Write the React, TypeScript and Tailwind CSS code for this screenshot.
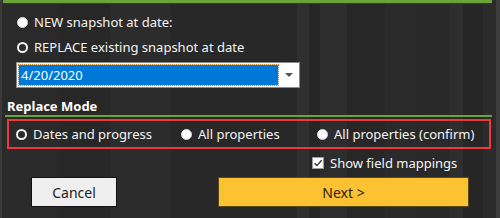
import React from "react";

const FONT = { fontFamily: '"Noto Sans", "Open Sans", "Liberation Sans", sans-serif' };

function Radio({ checked }: { checked?: boolean }) {
  // filled white dot = selected style in this dark theme, ring = unselected
  return checked ? (
    <span className="inline-block w-[11px] h-[11px] rounded-full bg-white border border-[#d8d8d8] shrink-0" />
  ) : (
    <span className="inline-block w-[11px] h-[11px] rounded-full border-2 border-[#f2f2f2] bg-[#2a2a2a] shrink-0" />
  );
}

function RadioRow({ label, checked, className = "" }: { label: string; checked?: boolean; className?: string }) {
  return (
    <div className={`flex items-center gap-[6px] ${className}`}>
      <Radio checked={checked} />
      <span className="text-[13px] leading-[20px] text-[#f4f4f4]">{label}</span>
    </div>
  );
}

export default function App() {
  return (
    <div
      style={FONT}
      className="w-[500px] h-[218px] overflow-hidden flex flex-col bg-[linear-gradient(90deg,#3a3a3a_0px,#3a3a3a_2px,#2a2a2a_2px,#2a2a2a_60px,#272727_60px,#272727_110px,#2c2c2c_110px,#2c2c2c_170px,#282828_170px,#282828_297px,#2f2f2f_297px,#2f2f2f_309px,#262626_309px,#262626_320px,#2d2d2d_320px,#2d2d2d_347px,#272727_347px,#272727_385px,#2a2a2a_385px,#2a2a2a_417px,#292929_417px,#292929_450px,#2e2e2e_450px,#2e2e2e_463px,#262626_463px,#262626_483px,#2b2b2b_483px,#2b2b2b_496px,#3c3c3c_496px,#3c3c3c_500px)]"
    >
      {/* top header strip */}
      <div className="ml-[3px] w-[489px] h-[4px] bg-[#6aa338] border-b border-[#3b3145]" />

      <RadioRow label="NEW snapshot at date:" checked className="mt-[8px] pl-[17px] h-[20px]" />
      <RadioRow label="REPLACE existing snapshot at date" className="mt-[5px] pl-[17px] h-[20px]" />

      {/* date dropdown */}
      <div className="mt-[5px] ml-[16px] w-[284px] h-[26px] bg-white border border-[#8a8a8a] flex items-center pl-[2px]">
        <div className="w-[259px] h-[20px] bg-[#0078d7] outline-1 outline-dotted outline-[#c47a2c] flex items-center pl-[2px]">
          <span className="text-[13px] text-white leading-none">4/20/2020</span>
        </div>
        <div className="flex-1 flex items-center justify-center">
          <span className="w-0 h-0 border-l-[4px] border-r-[4px] border-t-[4px] border-l-transparent border-r-transparent border-t-[#555]" />
        </div>
      </div>

      <div className="mt-[10px] ml-[7px] h-[16px] text-[13px] leading-[16px] font-bold text-white">Replace Mode</div>
      <div className="mt-[1px] ml-[5px] w-[487px] h-[2px] bg-[#6aa338]" />

      {/* highlighted mode options */}
      <div className="mt-[2px] ml-[7px] w-[484px] h-[30px] border-2 border-[#ec3a3a] flex items-center pl-[7px]">
        <RadioRow label="Dates and progress" className="w-[165px]" />
        <RadioRow label="All properties" checked className="w-[136px]" />
        <RadioRow label="All properties (confirm)" checked />
      </div>

      <div className="mt-[7px] ml-[312px] h-[14px] flex items-center gap-[6px]">
        <span className="w-[12px] h-[12px] bg-white border border-[#9a9a9a] flex items-center justify-center">
          <svg width="10" height="10" viewBox="0 0 10 10">
            <path d="M1.5 5.2 L4 7.6 L8.6 2.2" fill="none" stroke="#333" strokeWidth="1.4" />
          </svg>
        </span>
        <span className="text-[13px] leading-[14px] text-[#f4f4f4]">Show field mappings</span>
      </div>

      <div className="mt-[7px] flex">
        <button className="ml-[31px] w-[86px] h-[30px] bg-[#efefef] border border-[#111] text-[14px] text-[#222]">
          Cancel
        </button>
        <button className="ml-[101px] w-[251px] h-[30px] bg-[#fcc232] border border-[#5a4a1a] text-[14px] text-[#2a2110]">
          Next &gt;
        </button>
      </div>
    </div>
  );
}
